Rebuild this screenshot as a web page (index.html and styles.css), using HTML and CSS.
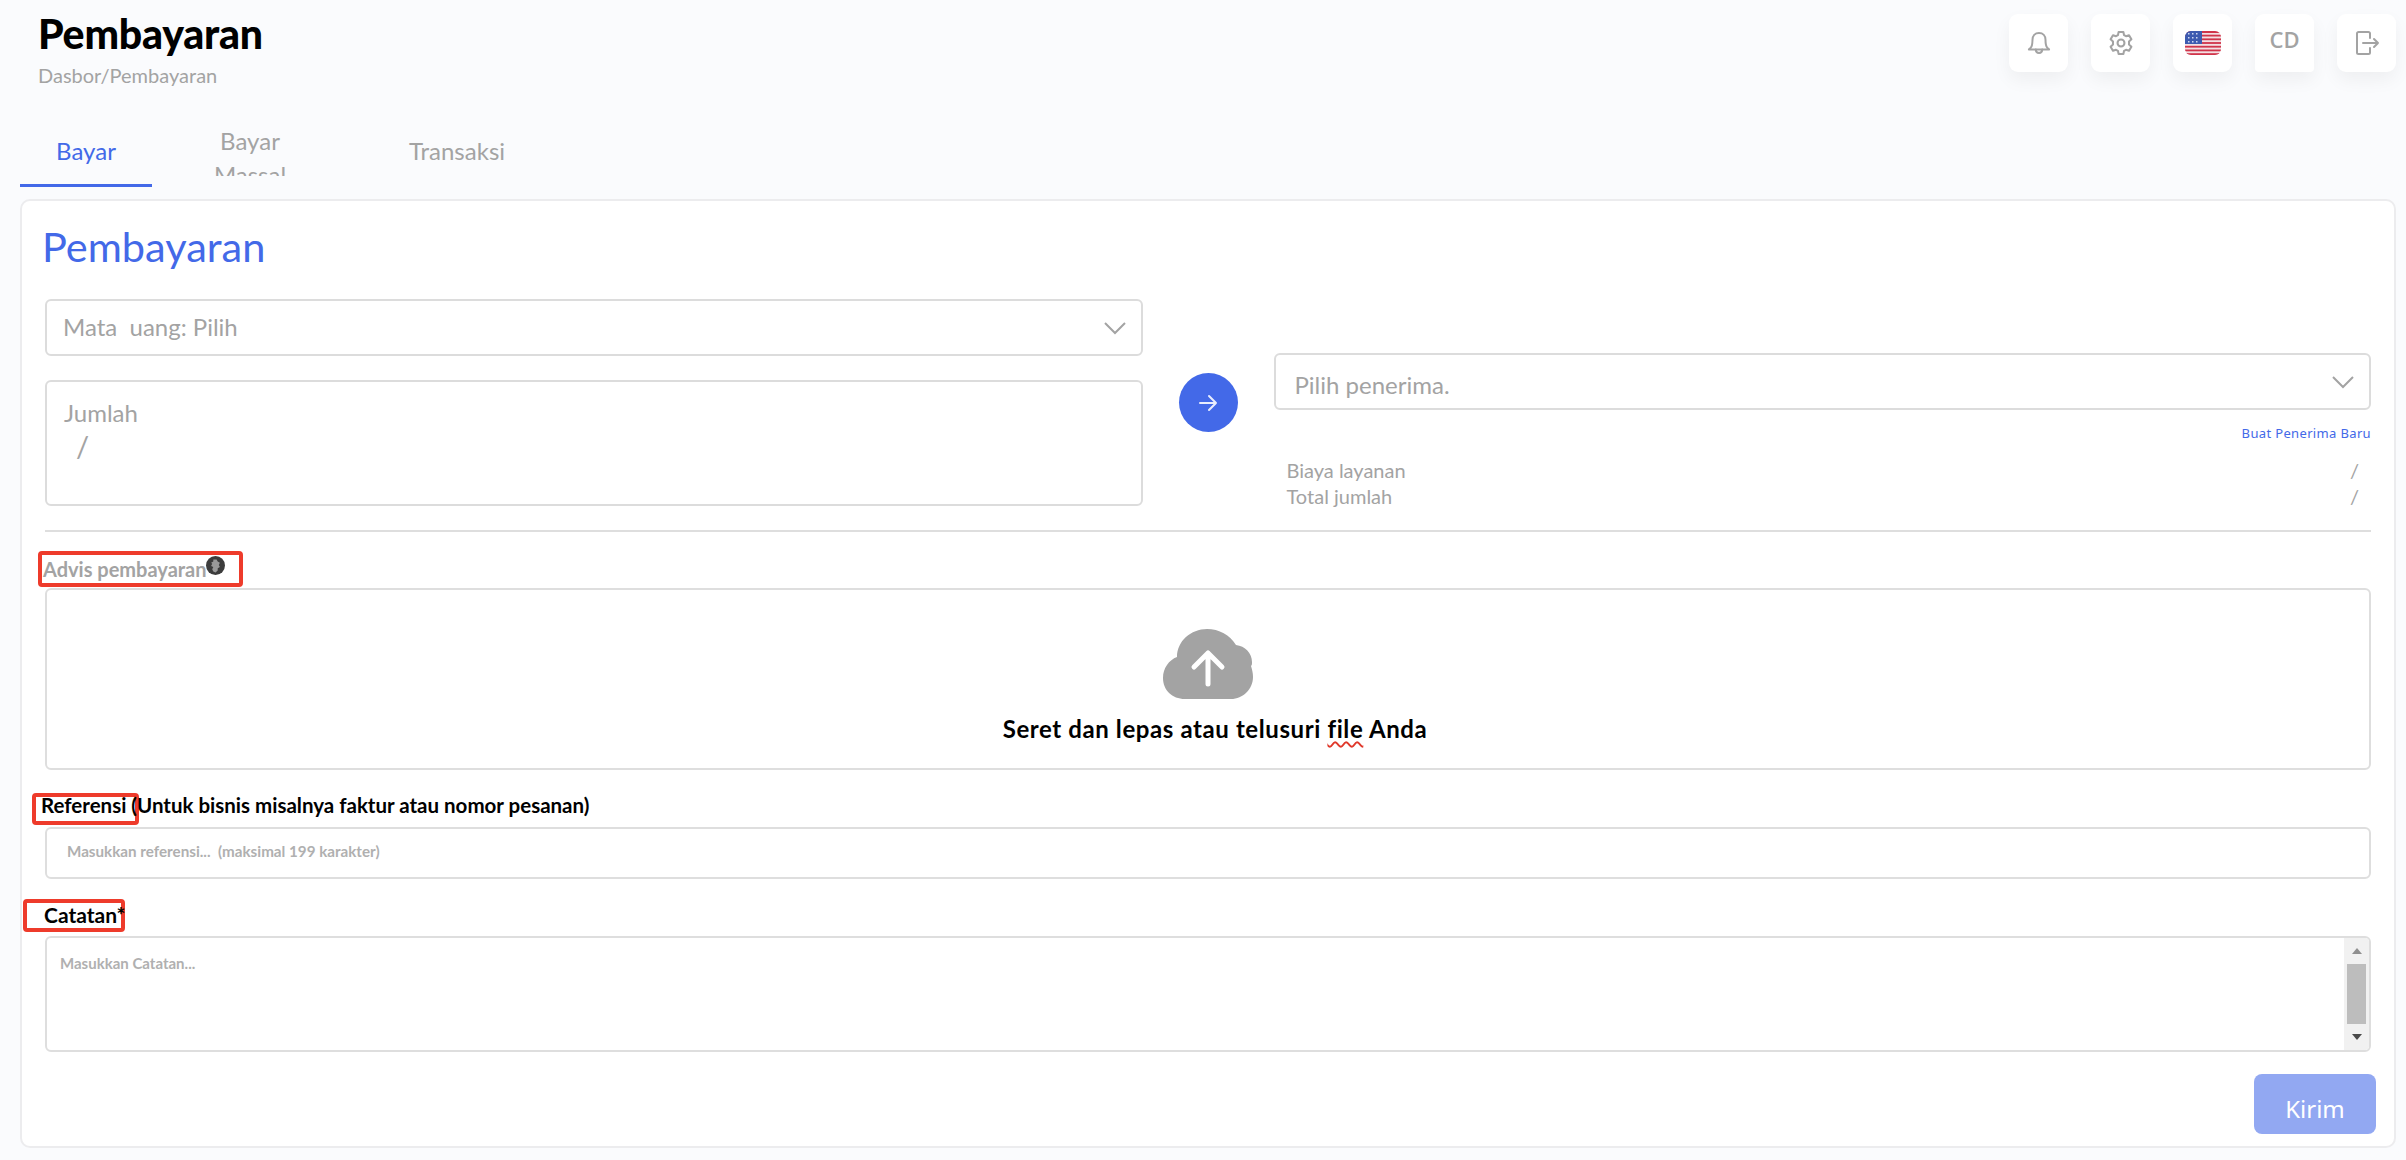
FILE: index.html
```html
<!DOCTYPE html>
<html lang="id">
<head>
  <meta charset="UTF-8">
  <title>Pembayaran</title>
  <link rel="stylesheet" href="styles.css">
</head>
<body>

  <header class="topbar">
    <div class="page-heading">
      <h1>Pembayaran</h1>
      <div class="crumbs">Dasbor/Pembayaran</div>
    </div>
    <div class="top-actions">
      <div class="top-btn">
        <svg width="26" height="26" viewBox="0 0 26 26" fill="none" stroke="#a3a3a3" stroke-width="2" stroke-linejoin="round" stroke-linecap="round">
          <path d="M13 3c-4 0-6.500 3-6.500 6.800 0 4.200-.6 6.400-1.600 7.700-.7.9-1.800 1.500-2 2h20.200c-.2-.5-1.300-1.100-2-2-1-1.300-1.600-3.500-1.600-7.700C19.500 6 17 3 13 3z"/>
          <path d="M9.800 19.600c0 2.100 1.400 3.400 3.200 3.400s3.200-1.300 3.200-3.400"/>
        </svg>
      </div>
      <div class="top-btn">
        <svg width="26" height="26" viewBox="0 0 24 24" fill="none" stroke="#a3a3a3" stroke-width="1.900" stroke-linejoin="round">
          <circle cx="12" cy="12" r="3.200"/>
          <path d="M9.800 1.800h4.400l.6 2.900 1.800 1 2.800-.9 2.200 3.800-2.200 2v2.800l2.200 2-2.200 3.800-2.800-.9-1.800 1-.6 2.900H9.800l-.6-2.900-1.800-1-2.800.9-2.200-3.800 2.200-2v-2.800l-2.200-2 2.200-3.800 2.800.9 1.800-1z"/>
        </svg>
      </div>
      <div class="top-btn">
        <svg class="flag" width="36" height="24" viewBox="0 0 36 24">
          <rect width="36" height="24" fill="#f3dfe2"/>
          <g fill="#d0344a">
            <rect width="36" height="2"/>
            <rect y="3.700" width="36" height="1.800"/>
            <rect y="7.400" width="36" height="1.800"/>
            <rect y="11.100" width="36" height="1.800"/>
            <rect y="14.800" width="36" height="1.800"/>
            <rect y="18.500" width="36" height="1.800"/>
            <rect y="22.200" width="36" height="1.800"/>
          </g>
          <rect width="17" height="13" fill="#3d5bb0"/>
          <g fill="#cfd8f0">
            <rect x="3" y="2" width="1.500" height="1.500"/>
            <rect x="7" y="2" width="1.500" height="1.500"/>
            <rect x="11" y="2" width="1.500" height="1.500"/>
            <rect x="3" y="6" width="1.500" height="1.500"/>
            <rect x="7" y="6" width="1.500" height="1.500"/>
            <rect x="11" y="6" width="1.500" height="1.500"/>
            <rect x="3" y="10" width="1.500" height="1.500"/>
            <rect x="7" y="10" width="1.500" height="1.500"/>
            <rect x="11" y="10" width="1.500" height="1.500"/>
          </g>
        </svg>
      </div>
      <div class="top-btn user-btn">CD</div>
      <div class="top-btn">
        <svg width="26" height="26" viewBox="0 0 26 26" fill="none" stroke="#a3a3a3" stroke-width="2" stroke-linecap="round" stroke-linejoin="round">
          <path d="M16 8V3.500C16 2.700 15.300 2 14.500 2H4.500C3.700 2 3 2.700 3 3.500v19c0 .8.700 1.500 1.500 1.500h10c.8 0 1.500-.7 1.500-1.500V18"/>
          <path d="M9 13h15M20 9l4 4-4 4"/>
        </svg>
      </div>
    </div>
  </header>

  <nav class="tabs">
    <div class="tab active"><div class="tab-text">Bayar</div></div>
    <div class="tab"><div class="tab-text two-line">Bayar<br>Massal</div></div>
    <div class="tab"><div class="tab-text">Transaksi</div></div>
  </nav>

  <main class="card">
    <h2 class="card-title">Pembayaran</h2>

    <div class="pay-row">
      <div class="pay-col">
        <div class="select-box">
          <span class="currency-text">Mata&nbsp; uang: Pilih</span>
          <svg class="chevron" width="24" height="14" viewBox="0 0 24 14"><path d="M2 2l10 10L22 2"/></svg>
        </div>
        <div class="amount-box">
          <div>Jumlah</div>
          <div class="amount-value">/</div>
        </div>
      </div>

      <div class="arrow-btn">
        <svg width="22" height="22" viewBox="0 0 22 22" fill="none" stroke="#e8edfd" stroke-width="2" stroke-linecap="round" stroke-linejoin="round">
          <path d="M3 11h16M12 4l7 7-7 7"/>
        </svg>
      </div>

      <div class="pay-col receiver-col">
        <div class="select-box receiver-select">
          <span class="receiver-text">Pilih penerima.</span>
          <svg class="chevron" width="24" height="14" viewBox="0 0 24 14"><path d="M2 2l10 10L22 2"/></svg>
        </div>
        <div class="new-receiver">Buat Penerima Baru</div>
        <div class="fee-row"><span>Biaya layanan</span><span>/</span></div>
        <div class="fee-row"><span>Total jumlah</span><span>/</span></div>
      </div>
    </div>

    <hr class="divider">

    <div class="field-label advice-label">
      <span>Advis pembayaran</span>
      <span class="info-dot">
        <svg width="11" height="14" viewBox="0 0 10 12" fill="#9a9a9a"><path d="M3 0h3l1 2 2 1-1 2 1 2-2 1v2l-2 2-2-1-1-2 1-2-2-1 1-2-1-1 2-1z"/></svg>
      </span>
      <span class="mark mark-advice"></span>
    </div>
    <div class="drop-zone">
      <svg width="90" height="70" viewBox="0 0 90 70">
        <path fill="#a3a3a3" d="M22 70C9 70 0 61 0 49c0-10 6-18 14-21C14 12 28 0 44 0c12 0 23 6 29 16 9 1 16 8 16 17 0 2 0 3-1 4 1 3 2 7 2 11 0 12-10 22-22 22z"/>
        <path fill="none" stroke="#fff" stroke-width="5" stroke-linecap="round" stroke-linejoin="round" d="M45 55V24M31 38l14-14 14 14"/>
      </svg>
      <div class="drop-text">Seret dan lepas atau telusuri <span class="misspelt">file</span> Anda</div>
    </div>

    <div class="field-label ref-label">
      <span class="label-text">Referensi (Untuk bisnis misalnya faktur atau nomor pesanan)</span>
      <span class="mark mark-ref"></span>
    </div>
    <div class="ref-input">Masukkan referensi...&nbsp; (maksimal 199 karakter)</div>

    <div class="field-label note-label">
      <span class="label-text">Catatan*</span>
      <span class="mark mark-note"></span>
    </div>
    <div class="note-box">
      <div class="note-text">Masukkan Catatan...</div>
      <div class="scroll-track">
        <div class="arrow-up"></div>
        <div class="scroll-thumb"></div>
        <div class="arrow-down"></div>
      </div>
    </div>

    <div class="form-actions">
      <div class="submit-btn">Kirim</div>
    </div>
  </main>

</body>
</html>
```

FILE: styles.css
```css
* {
  box-sizing: border-box;
}

html, body {
  height: 1160px;
  overflow: hidden;
}

body {
  margin: 0;
  background: #fafbfd;
  color: #a3a3a3;
  font-family: Lato, "Noto Sans", sans-serif;
}

.topbar {
  display: flex;
  justify-content: space-between;
  height: 124px;
  padding: 14px 10px 0 38px;
}

.page-heading h1 {
  margin: 0;
  font-size: 41px;
  line-height: 40px;
  font-weight: 900;
  letter-spacing: -0.2px;
  color: #000;
}

.crumbs {
  margin-top: 8px;
  font-size: 20px;
  line-height: 26px;
}

.top-actions {
  display: flex;
  gap: 23px;
}

.top-btn {
  display: flex;
  align-items: center;
  justify-content: center;
  width: 59px;
  height: 58px;
  background: #fff;
  border-radius: 9px;
  box-shadow: 0 8px 18px rgba(0, 0, 0, 0.05);
}

.flag {
  border-radius: 6px;
}

.user-btn {
  padding-bottom: 8px;
  font-family: "Open Sans", sans-serif;
  font-size: 22px;
  font-weight: 600;
  border-radius: 9px 9px 4px 4px;
}

.tabs {
  display: grid;
  grid-template-columns: 132px 196px 218px;
  margin-left: 20px;
  height: 63px;
}

.tab {
  text-align: center;
  font-size: 24px;
  border-bottom: 3px solid transparent;
}

.tab.active {
  color: #4369e8;
  border-bottom-color: #4369e8;
}

.tab-text {
  line-height: 54px;
}

.tab-text.two-line {
  height: 52px;
  overflow: hidden;
  line-height: 34px;
}

.card {
  width: 2376px;
  height: 949px;
  margin: 12px 0 0 20px;
  padding: 0 23px;
  background: #fff;
  border: 2px solid #ececee;
  border-radius: 10px;
}

.card-title {
  margin: 0 0 0 -3px;
  padding-top: 20px;
  height: 98px;
  font-size: 41.500px;
  line-height: 50px;
  font-weight: 400;
  color: #4369e8;
}

.pay-row {
  display: grid;
  grid-template-columns: 1fr 59px 1fr;
  column-gap: 36px;
  height: 231px;
  font-size: 24px;
}

.select-box {
  display: flex;
  align-items: center;
  justify-content: space-between;
  height: 57px;
  padding: 0 14px 0 16px;
  border: 2px solid #dcdcdc;
  border-radius: 6px;
}

.currency-text {
  padding-bottom: 2px;
}

.chevron {
  fill: none;
  stroke: #a3a3a3;
  stroke-width: 2;
}

.amount-box {
  height: 126px;
  margin-top: 24px;
  padding: 15px 17px;
  border: 2px solid #dcdcdc;
  border-radius: 6px;
  line-height: 32px;
}

.amount-value {
  margin-top: 1px;
  padding-left: 12px;
  font-size: 29px;
}

.arrow-btn {
  display: flex;
  align-items: center;
  justify-content: center;
  width: 59px;
  height: 59px;
  margin-top: 74px;
  background: #4369e8;
  border-radius: 50%;
}

.receiver-col {
  padding-top: 54px;
}

.receiver-select {
  padding-left: 19px;
}

.receiver-text {
  padding-top: 5px;
}

.new-receiver {
  margin-top: 13px;
  text-align: right;
  font-family: "Noto Sans", sans-serif;
  font-size: 13px;
  line-height: 20px;
  letter-spacing: 0.35px;
  color: #4369e8;
}

.fee-row {
  display: flex;
  justify-content: space-between;
  height: 26px;
  padding: 0 12px 0 13px;
  font-size: 20px;
  line-height: 26px;
}

.new-receiver + .fee-row {
  margin-top: 14px;
}

.divider {
  margin: 0;
  height: 2px;
  border: none;
  background: #dedede;
}

.field-label {
  position: relative;
  font-weight: 700;
  white-space: nowrap;
}

.label-text {
  position: relative;
  z-index: 1;
}

.advice-label {
  height: 56px;
  padding-top: 24px;
  font-size: 20px;
  line-height: 26px;
  margin-left: -2px;
}

.info-dot {
  position: absolute;
  left: 163px;
  top: 24px;
  display: flex;
  align-items: center;
  justify-content: center;
  width: 19px;
  height: 19px;
  background: #3c3c3c;
  border-radius: 50%;
}

.mark {
  position: absolute;
  border: 4px solid #ee3b2b;
  border-radius: 4px;
}

.mark-advice {
  left: -5px;
  top: 19px;
  width: 205px;
  height: 36px;
}

.drop-zone {
  display: flex;
  flex-direction: column;
  align-items: center;
  height: 182px;
  padding-top: 39px;
  border: 2px solid #dedede;
  border-radius: 6px;
}

.drop-text {
  margin-top: 14px;
  margin-left: 14px;
  font-size: 24px;
  line-height: 32px;
  font-weight: 700;
  color: #000;
  letter-spacing: 0.6px;
}

.misspelt {
  text-decoration: underline wavy #e0382a 2px;
  text-underline-offset: 3px;
}

.ref-label {
  height: 57px;
  margin-left: -4px;
  padding-top: 22px;
  font-size: 20.500px;
  line-height: 26px;
  color: #000;
}

.mark-ref {
  left: -9px;
  top: 23px;
  width: 107px;
  height: 32px;
}

.ref-input {
  height: 52px;
  padding-left: 20px;
  border: 2px solid #dedede;
  border-radius: 6px;
  font-size: 15.200px;
  line-height: 44px;
  font-weight: 700;
  color: #b0b0b0;
}

.note-label {
  height: 57px;
  padding-top: 23px;
  font-size: 21px;
  line-height: 26px;
  color: #000;
  margin-left: -1px;
}

.mark-note {
  left: -21px;
  top: 20px;
  width: 102px;
  height: 33px;
}

.note-box {
  display: flex;
  justify-content: space-between;
  height: 116px;
  border: 2px solid #dedede;
  border-radius: 6px;
  overflow: hidden;
}

.note-text {
  padding: 13px 0 0 13px;
  font-size: 15px;
  line-height: 24px;
  font-weight: 700;
  color: #b0b0b0;
}

.scroll-track {
  display: flex;
  flex-direction: column;
  align-items: center;
  justify-content: space-between;
  width: 25px;
  padding: 10px 0;
  background: #f1f1f1;
}

.scroll-thumb {
  width: 19px;
  height: 60px;
  background: #bdbdbd;
}

.arrow-up {
  width: 0;
  height: 0;
  border-left: 5px solid transparent;
  border-right: 5px solid transparent;
  border-bottom: 6px solid #8f8f8f;
}

.arrow-down {
  width: 0;
  height: 0;
  border-left: 5px solid transparent;
  border-right: 5px solid transparent;
  border-top: 6px solid #4a4a4a;
}

.form-actions {
  display: flex;
  justify-content: flex-end;
  margin-top: 22px;
  margin-right: -5px;
}

.submit-btn {
  width: 122px;
  height: 60px;
  padding-top: 17px;
  text-align: center;
  background: #92a8f2;
  border-radius: 8px;
  font-family: "Noto Sans", sans-serif;
  font-size: 24px;
  line-height: 36px;
  color: #fff;
}
```
